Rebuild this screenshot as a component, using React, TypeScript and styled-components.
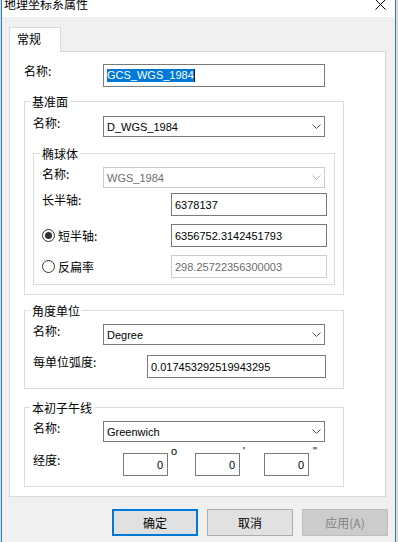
import React from "react";
import styled, { createGlobalStyle } from "styled-components";

const CJK = `"Noto Sans CJK SC", "Noto Sans CJK TC", sans-serif`;
const LATIN = `"Liberation Sans", Arial, sans-serif`;

const GlobalStyle = createGlobalStyle`
  html, body { margin: 0; padding: 0; }
  body {
    width: 398px; height: 542px; overflow: hidden;
    background: #dcdcdc;
    font-family: ${CJK};
  }
  * { box-sizing: border-box; }
`;

const Screen = styled.div`
  width: 398px;
  height: 542px;
  display: flex;
  background: #dadada;
  overflow: hidden;
`;

const Window = styled.div`
  margin-left: 1px;
  width: 395px;
  height: 542px;
  flex: none;
  border-left: 1px solid #2a7fd4;
  border-right: 1px solid #2a7fd4;
  display: flex;
  flex-direction: column;
  background: #f0f0f0;
`;

const TitleBar = styled.div`
  height: 17px;
  flex: none;
  background: #ffffff;
  display: flex;
  align-items: flex-start;
  justify-content: space-between;
  overflow: hidden;
`;

const TitleText = styled.div`
  margin: -2px 0 0 2px;
  font: 12px/12px ${CJK};
  color: #000;
  white-space: nowrap;
`;

const CloseIcon = styled.svg`
  margin: -1px 9px 0 0;
  flex: none;
`;

const Body = styled.div`
  flex: 1;
  display: flex;
  flex-direction: column;
  padding: 10px 0 0 7px;
`;

const TabStrip = styled.div`
  display: flex;
`;

const Tab = styled.div`
  position: relative;
  z-index: 1;
  width: 52px;
  height: 25px;
  margin-bottom: -1px;
  border: 1px solid #d9d9d9;
  border-bottom: none;
  background: #ffffff;
  padding-left: 7px;
  font: 12px/22px ${CJK};
  color: #000;
`;

const Panel = styled.div`
  width: 377px;
  height: 446px;
  border: 1px solid #d9d9d9;
  background: #ffffff;
  padding: 12px 0 0 14px;
  display: flex;
  flex-direction: column;
`;

const Row = styled.div<{ $mt?: number; $center?: boolean }>`
  display: flex;
  align-items: ${(p) => (p.$center ? "center" : "flex-start")};
  margin-top: ${(p) => p.$mt ?? 0}px;
`;

const Label = styled.div<{ $w: number }>`
  width: ${(p) => p.$w}px;
  flex: none;
  margin-top: -1px;
  font: 12px/16px ${CJK};
  color: #000;
  white-space: nowrap;
`;

const RadioLabel = styled.label<{ $w: number }>`
  width: ${(p) => p.$w}px;
  flex: none;
  display: flex;
  align-items: center;
  font: 12px/16px ${CJK};
  color: #000;
  white-space: nowrap;
`;

const RadioCircle = styled.span<{ $checked?: boolean }>`
  width: 13px;
  height: 13px;
  flex: none;
  border-radius: 50%;
  border: 1px solid #333333;
  background: #ffffff;
  margin-right: 3px;
  display: flex;
  align-items: center;
  justify-content: center;
  &::after {
    content: "";
    width: 7px;
    height: 7px;
    border-radius: 50%;
    background: #333333;
    display: ${(p) => (p.$checked ? "block" : "none")};
  }
`;

const Field = styled.div<{ $w: number; $disabled?: boolean; $right?: boolean }>`
  width: ${(p) => p.$w}px;
  height: 23px;
  flex: none;
  border: 1px solid ${(p) => (p.$disabled ? "#cccccc" : "#7a7a7a")};
  background: #ffffff;
  display: flex;
  align-items: center;
  justify-content: ${(p) => (p.$right ? "flex-end" : "flex-start")};
  padding: 0 4px 0 3px;
  font: 11px ${LATIN};
  color: ${(p) => (p.$disabled ? "#6d6d6d" : "#000000")};
  white-space: nowrap;
  overflow: hidden;
`;

const Highlight = styled.span`
  display: inline-block;
  height: 13px;
  line-height: 13px;
  background: #0078d7;
  color: #ffffff;
`;

const Caret = styled.span`
  display: inline-block;
  width: 1px;
  height: 13px;
  background: #1a1a1a;
`;

const SelectBox = styled.div<{ $disabled?: boolean }>`
  width: 222px;
  height: 21px;
  flex: none;
  border: 1px solid ${(p) => (p.$disabled ? "#cccccc" : "#7a7a7a")};
  background: #ffffff;
  display: flex;
  align-items: center;
  justify-content: space-between;
  padding: 0 3px 0 3px;
  font: 11px ${LATIN};
  color: ${(p) => (p.$disabled ? "#6d6d6d" : "#000000")};
  white-space: nowrap;
`;

const Group = styled.fieldset<{ $w: number; $mt: number; $ml?: number }>`
  width: ${(p) => p.$w}px;
  margin: ${(p) => p.$mt}px 0 0 ${(p) => p.$ml ?? 0}px;
  padding: 0;
  border: 1px solid #dcdcdc;
  min-width: 0;
  flex: none;
`;

const Legend = styled.legend<{ $indent: number }>`
  margin-left: ${(p) => p.$indent}px;
  padding: 0 2px;
  font: 12px/17px ${CJK};
  color: #000;
`;

const GroupBody = styled.div<{ $pt: number; $pb: number; $pl: number }>`
  padding: ${(p) => p.$pt}px 0 ${(p) => p.$pb}px ${(p) => p.$pl}px;
  display: flex;
  flex-direction: column;
`;

const Mark = styled.span<{ $w: number; $pl: number }>`
  width: ${(p) => p.$w}px;
  flex: none;
  margin-top: -7px;
  padding-left: ${(p) => p.$pl}px;
  font: 11px/11px ${LATIN};
  color: #000;
`;

const ButtonRow = styled.div`
  margin-top: 12px;
  display: flex;
  justify-content: flex-end;
  gap: 9px;
  padding-right: 7px;
`;

const Button = styled.button<{ $variant?: "default" | "normal" | "disabled" }>`
  width: 86px;
  height: 27px;
  margin: 0;
  padding: 0;
  font: 12px/1 ${CJK};
  background: ${(p) => (p.$variant === "disabled" ? "#cccccc" : "#e1e1e1")};
  color: ${(p) => (p.$variant === "disabled" ? "#838383" : "#000000")};
  border: ${(p) =>
    p.$variant === "default"
      ? "2px solid #0078d7"
      : p.$variant === "disabled"
      ? "1px solid #bfbfbf"
      : "1px solid #adadad"};
  border-radius: 0;
`;

const Chevron = ({ disabled }: { disabled?: boolean }) => (
  <svg width="9" height="5" viewBox="0 0 9 5">
    <polyline
      points="0.5,0.5 4.5,4.5 8.5,0.5"
      fill="none"
      stroke={disabled ? "#b4b4b4" : "#505050"}
      strokeWidth="1"
    />
  </svg>
);

const Select = ({ value, disabled }: { value: string; disabled?: boolean }) => (
  <SelectBox $disabled={disabled}>
    <span>{value}</span>
    <Chevron disabled={disabled} />
  </SelectBox>
);

export default function App() {
  return (
    <>
      <GlobalStyle />
      <Screen>
        <Window>
          <TitleBar>
            <TitleText>地理坐标系属性</TitleText>
            <CloseIcon width="11" height="11" viewBox="0 0 11 11">
              <line x1="0.5" y1="0.5" x2="10.5" y2="10.5" stroke="#000" strokeWidth="1" />
              <line x1="10.5" y1="0.5" x2="0.5" y2="10.5" stroke="#000" strokeWidth="1" />
            </CloseIcon>
          </TitleBar>
          <Body>
            <TabStrip>
              <Tab>常规</Tab>
            </TabStrip>
            <Panel>
              <Row>
                <Label $w={79}>名称:</Label>
                <Field $w={222}>
                  <Highlight>GCS_WGS_1984</Highlight>
                  <Caret />
                </Field>
              </Row>

              <Group $w={320} $mt={6}>
                <Legend $indent={5}>基准面</Legend>
                <GroupBody $pt={6} $pb={9} $pl={8}>
                  <Row>
                    <Label $w={70}>名称:</Label>
                    <Select value="D_WGS_1984" />
                  </Row>
                  <Group $w={302} $mt={8}>
                    <Legend $indent={6}>椭球体</Legend>
                    <GroupBody $pt={5} $pb={6} $pl={8}>
                      <Row>
                        <Label $w={61}>名称:</Label>
                        <Select value="WGS_1984" disabled />
                      </Row>
                      <Row $mt={5}>
                        <Label $w={129}>长半轴:</Label>
                        <Field $w={156}>6378137</Field>
                      </Row>
                      <Row $mt={8} $center>
                        <RadioLabel $w={129}>
                          <RadioCircle $checked />
                          短半轴:
                        </RadioLabel>
                        <Field $w={156}>6356752.3142451793</Field>
                      </Row>
                      <Row $mt={8} $center>
                        <RadioLabel $w={129}>
                          <RadioCircle />
                          反扁率
                        </RadioLabel>
                        <Field $w={156} $disabled>
                          298.25722356300003
                        </Field>
                      </Row>
                    </GroupBody>
                  </Group>
                </GroupBody>
              </Group>

              <Group $w={320} $mt={7}>
                <Legend $indent={5}>角度单位</Legend>
                <GroupBody $pt={5} $pb={10} $pl={8}>
                  <Row>
                    <Label $w={70}>名称:</Label>
                    <Select value="Degree" />
                  </Row>
                  <Row $mt={10}>
                    <Label $w={114}>每单位弧度:</Label>
                    <Field $w={179}>0.017453292519943295</Field>
                  </Row>
                </GroupBody>
              </Group>

              <Group $w={320} $mt={10}>
                <Legend $indent={5}>本初子午线</Legend>
                <GroupBody $pt={5} $pb={10} $pl={8}>
                  <Row>
                    <Label $w={70}>名称:</Label>
                    <Select value="Greenwich" />
                  </Row>
                  <Row $mt={11}>
                    <Label $w={90}>经度:</Label>
                    <Field $w={45} $right>
                      0
                    </Field>
                    <Mark $w={27} $pl={3}>
                      o
                    </Mark>
                    <Field $w={45} $right>
                      0
                    </Field>
                    <Mark $w={24} $pl={3}>
                      '
                    </Mark>
                    <Field $w={45} $right>
                      0
                    </Field>
                    <Mark $w={20} $pl={4}>
                      "
                    </Mark>
                  </Row>
                </GroupBody>
              </Group>
            </Panel>
            <ButtonRow>
              <Button $variant="default">确定</Button>
              <Button $variant="normal">取消</Button>
              <Button $variant="disabled">应用(A)</Button>
            </ButtonRow>
          </Body>
        </Window>
      </Screen>
    </>
  );
}
